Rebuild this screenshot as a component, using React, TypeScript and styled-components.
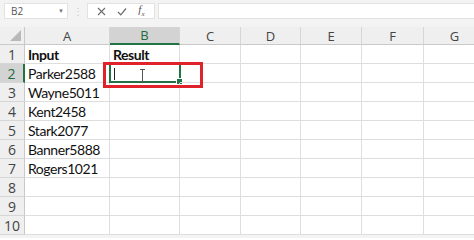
import styled, { createGlobalStyle, css } from 'styled-components'

const GlobalStyle = createGlobalStyle`
    html, body {
        margin: 0;
        padding: 0;
        background: #ffffff;
        overflow: hidden;
    }
    * {
        box-sizing: border-box;
    }
`

const Window = styled.div`
    width: 474px;
    height: 238px;
    overflow: hidden;
    background: #f3f3f3;
    font-family: "Open Sans", "Noto Sans", sans-serif;
`

const FormulaBar = styled.div`
    display: flex;
    align-items: center;
    height: 27px;
    padding: 0 0 5px 4px;
`

const NameBox = styled.div`
    display: flex;
    align-items: center;
    justify-content: space-between;
    width: 64px;
    height: 16px;
    padding: 0 3px 0 6px;
    background: #ffffff;
    border: 1px solid #e2e2e2;
    font-size: 10px;
    color: #555;
`

const Caret = styled.span`
    font-size: 6px;
    color: #777;
`

const Grip = styled.span`
    width: 19px;
    text-align: center;
    font-size: 10px;
    color: #c8c8c8;
`

const FormulaButtons = styled.div`
    display: flex;
    align-items: center;
    justify-content: space-around;
    width: 68px;
    height: 16px;
    padding: 0 4px;
    background: #ffffff;
    border: 1px solid #e2e2e2;
`

const Fx = styled.span`
    font-family: "Liberation Serif", serif;
    font-style: italic;
    font-size: 11px;
    color: #555;
    sub {
        font-size: 7px;
    }
`

const FormulaInput = styled.div`
    flex: 1;
    height: 16px;
    margin-left: 3px;
    background: #ffffff;
    border: 1px solid #e2e2e2;
    border-right: none;
`

const SheetArea = styled.div`
    position: relative;
`

const Grid = styled.div`
    display: grid;
    grid-template-columns: 25px 85px 70px 61px 60px 61px 62px 62px;
    grid-template-rows: 18px repeat(10, 19px);
    background: #ffffff;
`

const Corner = styled.div`
    position: relative;
    background: #efefef;
    border-right: 1px solid #c9c9c9;
    border-bottom: 1px solid #c9c9c9;
    &::after {
        content: '';
        position: absolute;
        right: 3px;
        bottom: 3px;
        border-style: solid;
        border-width: 0 0 11px 11px;
        border-color: transparent transparent #b9b9b9 transparent;
    }
`

const headerBase = css`
    display: flex;
    align-items: center;
    justify-content: center;
    background: #efefef;
    color: #444;
    font-size: 13px;
`

const ColHeader = styled.div<{ $active?: boolean }>`
    ${headerBase};
    border-right: 1px solid #d6d6d6;
    border-bottom: ${p => (p.$active ? '2px solid #217346' : '1px solid #c9c9c9')};
    background: ${p => (p.$active ? '#d3d3d3' : '#efefef')};
    color: ${p => (p.$active ? '#1d6b40' : '#444')};
`

const RowHeader = styled.div<{ $active?: boolean }>`
    ${headerBase};
    font-size: 14px;
    border-bottom: 1px solid #d6d6d6;
    border-right: ${p => (p.$active ? '2px solid #217346' : '1px solid #c9c9c9')};
    background: ${p => (p.$active ? '#d3d3d3' : '#efefef')};
    color: ${p => (p.$active ? '#1d6b40' : '#444')};
`

const Cell = styled.div<{ $bold?: boolean }>`
    position: relative;
    display: flex;
    align-items: center;
    padding: 0 2px 0 3px;
    border-right: 1px solid #dedede;
    border-bottom: 1px solid #dedede;
    font-family: Lato, "Liberation Sans", sans-serif;
    font-size: 14px;
    letter-spacing: -0.45px;
    font-weight: ${p => (p.$bold ? 700 : 400)};
    color: #111;
    white-space: nowrap;
`

const Selection = styled.div`
    position: absolute;
    left: -1px;
    top: -1px;
    right: -2px;
    bottom: -1px;
    border: 2px solid #217346;
    pointer-events: none;
    &::after {
        content: '';
        position: absolute;
        right: -4px;
        bottom: -4px;
        width: 5px;
        height: 5px;
        background: #217346;
        border: 1px solid #ffffff;
    }
`

const TextCaret = styled.span`
    position: absolute;
    left: 3px;
    top: 3px;
    width: 1px;
    height: 12px;
    background: #222;
`

const IBeam = styled.svg`
    position: absolute;
    left: 28px;
    top: 4px;
`

const Callout = styled.div`
    position: absolute;
    left: 103px;
    top: 35px;
    width: 100px;
    height: 26px;
    border: 3px solid #e0222a;
    pointer-events: none;
`

const columns = ['A', 'B', 'C', 'D', 'E', 'F', 'G']

const data: Record<number, { a?: string; b?: string; bold?: boolean }> = {
    1: { a: 'Input', b: 'Result', bold: true },
    2: { a: 'Parker2588' },
    3: { a: 'Wayne5011' },
    4: { a: 'Kent2458' },
    5: { a: 'Stark2077' },
    6: { a: 'Banner5888' },
    7: { a: 'Rogers1021' },
}

const App = () => {
    const rows = Array.from({ length: 10 }, (_, i) => i + 1)

    return (
        <Window>
            <GlobalStyle />
            <FormulaBar>
                <NameBox>
                    B2
                    <Caret>▼</Caret>
                </NameBox>
                <Grip>⋮</Grip>
                <FormulaButtons>
                    <svg width="9" height="9" viewBox="0 0 9 9">
                        <path d="M1 1 L8 8 M8 1 L1 8" stroke="#6a6a6a" strokeWidth="1.1" fill="none" />
                    </svg>
                    <svg width="10" height="9" viewBox="0 0 10 9">
                        <path d="M1 5 L3.8 7.8 L9 1.5" stroke="#6a6a6a" strokeWidth="1.2" fill="none" />
                    </svg>
                    <Fx>
                        f<sub>x</sub>
                    </Fx>
                </FormulaButtons>
                <FormulaInput />
            </FormulaBar>
            <SheetArea>
                <Grid>
                    <Corner />
                    {columns.map(c => (
                        <ColHeader key={c} $active={c === 'B'}>
                            {c}
                        </ColHeader>
                    ))}
                    {rows.map(r => {
                        const row = data[r] || {}
                        return [
                            <RowHeader key={`h${r}`} $active={r === 2}>
                                {r}
                            </RowHeader>,
                            ...columns.map(c => (
                                <Cell key={`${c}${r}`} $bold={row.bold}>
                                    {c === 'A' && row.a}
                                    {c === 'B' && row.b}
                                    {c === 'B' && r === 2 && (
                                        <Selection>
                                            <TextCaret />
                                            <IBeam width="7" height="13" viewBox="0 0 7 13">
                                                <path
                                                    d="M1 0.5 H6 M3.5 0.5 V12.5 M1 12.5 H6"
                                                    stroke="#555"
                                                    strokeWidth="1"
                                                    fill="none"
                                                />
                                            </IBeam>
                                        </Selection>
                                    )}
                                </Cell>
                            )),
                        ]
                    })}
                </Grid>
                <Callout />
            </SheetArea>
        </Window>
    )
}

export default App
